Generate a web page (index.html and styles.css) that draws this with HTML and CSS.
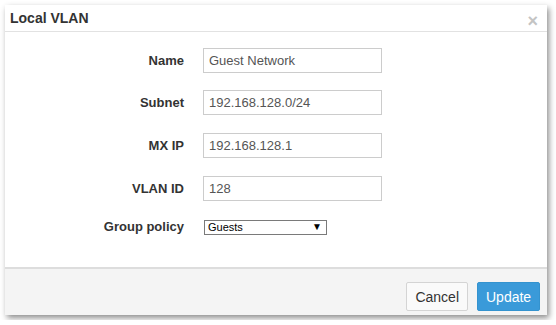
FILE: index.html
```html
<!DOCTYPE html>
<html lang="en">
  <head>
    <meta charset="UTF-8" />
    <meta name="viewport" content="width=device-width, initial-scale=1.0" />
    <title>Local VLAN</title>
    <link rel="stylesheet" href="styles.css">
  </head>
  <body>
    <div class="modal">
      <div class="modal-header">
        <h3>Local VLAN</h3>
        <span class="close">&times;</span>
      </div>

      <div class="modal-body">
        <div class="form-row">
          <label for="name">Name</label>
          <input type="text" id="name" value="Guest Network" />
        </div>
        <div class="form-row">
          <label for="subnet">Subnet</label>
          <input type="text" id="subnet" value="192.168.128.0/24" />
        </div>
        <div class="form-row">
          <label for="mxip">MX IP</label>
          <input type="text" id="mxip" value="192.168.128.1" />
        </div>
        <div class="form-row">
          <label for="vlanid">VLAN ID</label>
          <input type="text" id="vlanid" value="128" />
        </div>
        <div class="form-row select-row">
          <label for="policy">Group policy</label>
          <div class="select-wrap">
            <select id="policy">
              <option>Guests</option>
              <option>Normal</option>
              <option>Blocked</option>
            </select>
            <span class="arrow">&#9660;</span>
          </div>
        </div>
      </div>

      <div class="modal-footer">
        <button class="btn">Cancel</button>
        <button class="btn btn-primary">Update</button>
      </div>
    </div>
  </body>
</html>
```

FILE: styles.css
```css
body {
  margin: 0;
  padding: 5px;
  background: #fff;
  font-family: "Liberation Sans", Arial, sans-serif;
  font-size: 13px;
  color: #333;
}
.modal {
  width: 542px;
  height: 310px;
  background: #fff;
  box-shadow: 2px 3px 6px rgba(0, 0, 0, 0.45);
  display: flex;
  flex-direction: column;
}
.modal-header {
  height: 26px;
  border-bottom: 1px solid #e2e2e2;
  display: flex;
  justify-content: space-between;
  padding: 0 9px 0 5px;
}
.modal-header h3 {
  margin: 5px 0 0;
  font-size: 14px;
  font-weight: bold;
  color: #333;
}
.close {
  margin-top: 7px;
  font-size: 18px;
  font-weight: bold;
  line-height: 18px;
  color: #c4c4c4;
}
.modal-body {
  flex: 1;
  padding-top: 16px;
}
.form-row {
  display: flex;
  align-items: center;
  height: 25px;
  margin-bottom: 18px;
}
.form-row:first-child {
  margin-bottom: 17px;
}
label {
  width: 179px;
  margin-right: 19px;
  text-align: right;
  font-weight: bold;
  font-size: 13px;
  color: #333;
}
input {
  box-sizing: border-box;
  width: 179px;
  height: 25px;
  padding: 0 5px;
  border: 1px solid #ccc;
  font-family: "Liberation Sans", Arial, sans-serif;
  font-size: 13px;
  color: #555;
}
.select-row {
  height: 15px;
  margin-top: 1px;
}
.select-wrap {
  position: relative;
  width: 123px;
  height: 15px;
  margin-left: 1px;
}
select {
  appearance: none;
  -webkit-appearance: none;
  box-sizing: border-box;
  width: 123px;
  height: 15px;
  padding: 0 3px;
  border: 1px solid #7a7a7a;
  border-radius: 0;
  background: #fff;
  font-family: "Liberation Sans", Arial, sans-serif;
  font-size: 11px;
  line-height: 13px;
  color: #000;
}
.arrow {
  position: absolute;
  right: 5px;
  top: 2px;
  font-size: 10px;
  line-height: 11px;
  color: #000;
  pointer-events: none;
}
.modal-footer {
  height: 46px;
  border-top: 2px solid #ddd;
  background: #f4f4f4;
  display: flex;
  justify-content: flex-end;
  align-items: flex-start;
  padding: 0 7px 0 0;
}
.btn {
  margin-top: 13px;
  margin-left: 9px;
  height: 29px;
  padding: 0 8px;
  border: 1px solid #d4d4d4;
  border-radius: 2px;
  background: #fafafa;
  font-family: "Liberation Sans", Arial, sans-serif;
  font-size: 14px;
  color: #333;
  cursor: pointer;
}
.btn-primary {
  width: 63px;
  border-color: #3493cf;
  background: #3a9ad9;
  color: #fff;
}
```
